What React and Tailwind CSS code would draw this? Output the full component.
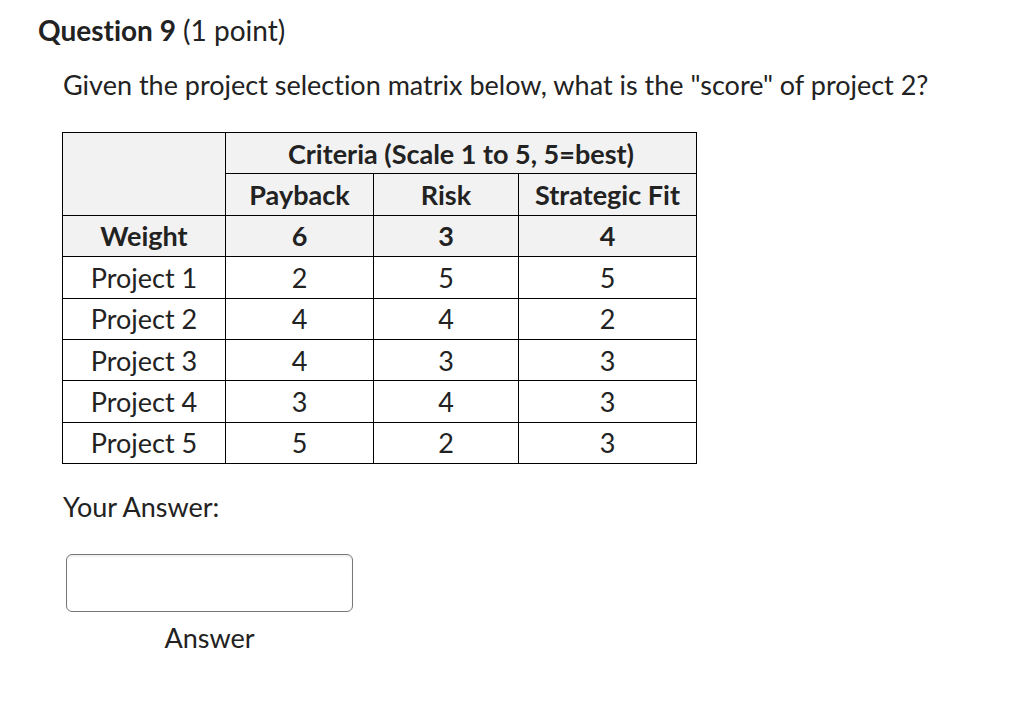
const rows = [
  ['Project 1', 2, 5, 5],
  ['Project 2', 4, 4, 2],
  ['Project 3', 4, 3, 3],
  ['Project 4', 3, 4, 3],
  ['Project 5', 5, 2, 3],
];

const cell = 'border border-black h-[41.4px] text-center p-0';

export default function App() {
  return (
    <div className="w-[1016px] h-[708px] bg-white text-[#222] font-['Lato','Open_Sans',sans-serif] [font-variant-ligatures:none] pl-[38px] pt-[12px]">
      <h2 className="text-[28px] leading-[36px]">
        <span className="font-bold">Question 9</span> (1 point)
      </h2>

      <div className="pl-[25px]">
        <p className="text-[27px] leading-[32px] mt-[21px]">
          Given the project selection matrix below, what is the "score" of project 2?
        </p>

        <table className="mt-[31px] ml-[-1px] border-collapse text-[27px] leading-none">
          <colgroup>
            <col className="w-[163px]" />
            <col className="w-[148px]" />
            <col className="w-[145px]" />
            <col className="w-[178px]" />
          </colgroup>
          <thead>
            <tr className="bg-[#f2f2f2]">
              <td className={cell} rowSpan={2}></td>
              <th className={`${cell} font-bold`} colSpan={3}>
                Criteria (Scale 1 to 5, 5=best)
              </th>
            </tr>
            <tr className="bg-[#f2f2f2] font-bold">
              <th className={cell}>Payback</th>
              <th className={cell}>Risk</th>
              <th className={cell}>Strategic Fit</th>
            </tr>
            <tr className="bg-[#f2f2f2] font-bold">
              <th className={cell}>Weight</th>
              <th className={cell}>6</th>
              <th className={cell}>3</th>
              <th className={cell}>4</th>
            </tr>
          </thead>
          <tbody>
            {rows.map((r) => (
              <tr key={r[0]}>
                {r.map((v, i) => (
                  <td key={i} className={cell}>
                    {v}
                  </td>
                ))}
              </tr>
            ))}
          </tbody>
        </table>

        <p className="text-[27px] leading-[32px] mt-[27px]">Your Answer:</p>

        <div className="ml-[3px] w-[287px] mt-[31px] flex flex-col items-center">
          <input
            type="text"
            aria-label="Answer"
            className="w-full h-[58px] border border-[#777] rounded-[6px] bg-white shadow-[inset_0_2px_2px_rgba(0,0,0,0.06)] outline-none"
          />
          <span className="text-[27px] leading-[32px] mt-[10px]">Answer</span>
        </div>
      </div>
    </div>
  );
}
